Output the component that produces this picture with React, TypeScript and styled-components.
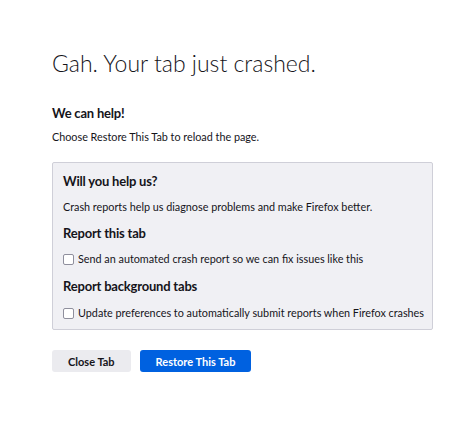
import React from "react";
import styled, { createGlobalStyle, css } from "styled-components";

const Global = createGlobalStyle`
  html, body { margin: 0; padding: 0; background: #ffffff; }
  body { font-family: Lato, "Open Sans", sans-serif; color: #15141a; }
  * { box-sizing: border-box; }
`;

const headingType = css`
  font-size: 13px;
  line-height: 18px;
  font-weight: 700;
  letter-spacing: -0.2px;
`;

const Page = styled.main`
  padding: 48px 0 40px 52px;
  width: 474px;
`;

const Title = styled.h1`
  margin: 0;
  font-size: 23px;
  line-height: 30px;
  font-weight: 300;
`;

const SubHeading = styled.h2`
  margin: 26px 0 0;
  ${headingType}
`;

const Text = styled.p<{ $gap?: number }>`
  margin: ${(p) => p.$gap ?? 7}px 0 0;
  font-size: 10.8px;
  line-height: 16px;
`;

const Panel = styled.section`
  margin-top: 17px;
  width: 381px;
  background: #f0f0f4;
  border: 1px solid #cfcfd8;
  border-radius: 2px;
  padding: 9px 10px 8px 10px;
  display: flex;
  flex-direction: column;
`;

const PanelHeading = styled.h3<{ $gap?: number }>`
  margin: ${(p) => p.$gap ?? 0}px 0 0;
  ${headingType}
`;

const CheckRow = styled.label<{ $gap?: number }>`
  margin-top: ${(p) => p.$gap ?? 9}px;
  display: flex;
  align-items: center;
  gap: 4px;
  font-size: 10.8px;
  line-height: 16px;
  white-space: nowrap;
`;

const Box = styled.span`
  width: 11px;
  height: 11px;
  flex: none;
  background: #ffffff;
  border: 1px solid #8f8f9d;
  border-radius: 2px;
`;

const Actions = styled.div`
  margin-top: 20px;
  display: flex;
  gap: 9px;
`;

const Button = styled.button<{ $primary?: boolean }>`
  height: 22px;
  padding: 0 16px;
  border: none;
  border-radius: 3px;
  font-family: inherit;
  font-size: 11px;
  font-weight: 700;
  background: ${(p) => (p.$primary ? "#0061e0" : "#ebebef")};
  color: ${(p) => (p.$primary ? "#ffffff" : "#15141a")};
`;

export default function App() {
  return (
    <>
      <Global />
      <Page>
        <Title>Gah. Your tab just crashed.</Title>
        <SubHeading>We can help!</SubHeading>
        <Text>Choose Restore This Tab to reload the page.</Text>
        <Panel>
          <PanelHeading>Will you help us?</PanelHeading>
          <Text $gap={9}>Crash reports help us diagnose problems and make Firefox better.</Text>
          <PanelHeading $gap={9}>Report this tab</PanelHeading>
          <CheckRow $gap={9}>
            <Box />
            Send an automated crash report so we can fix issues like this
          </CheckRow>
          <PanelHeading $gap={10}>Report background tabs</PanelHeading>
          <CheckRow $gap={10}>
            <Box />
            Update preferences to automatically submit reports when Firefox crashes
          </CheckRow>
        </Panel>
        <Actions>
          <Button>Close Tab</Button>
          <Button $primary>Restore This Tab</Button>
        </Actions>
      </Page>
    </>
  );
}
